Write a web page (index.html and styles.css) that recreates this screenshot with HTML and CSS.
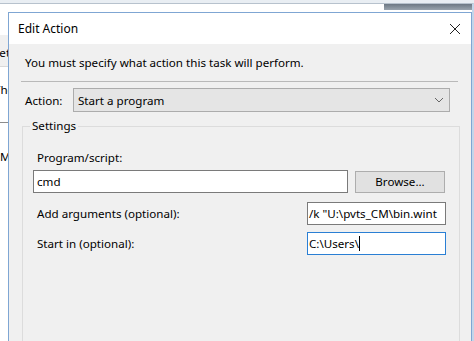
FILE: index.html
```html
<!DOCTYPE html>
<html lang="en">
  <head>
    <meta charset="UTF-8" />
    <title>Edit Action</title>
    <link rel="stylesheet" href="styles.css">
  </head>
  <body>
    <div class="desktop">
      <!-- window behind the dialog -->
      <div class="back-window">
        <div class="back-top">
          <div class="back-top-light"></div>
          <div class="back-top-dark"></div>
        </div>
        <div class="back-side">
          <div class="back-tab"><span>Settings</span></div>
          <p class="back-text"><span class="back-shift">The</span></p>
          <div class="back-line"></div>
          <p class="back-text back-text-low">MW</p>
        </div>
      </div>

      <!-- Edit Action dialog -->
      <div class="dialog">
        <div class="titlebar">
          <span class="title">Edit Action</span>
          <svg class="close" width="12" height="12" viewBox="0 0 12 12">
            <path d="M1 1 L11 11 M11 1 L1 11" stroke="#222" stroke-width="1" fill="none" />
          </svg>
        </div>

        <div class="dialog-body">
          <p class="intro">You must specify what action this task will perform.</p>
          <div class="separator"></div>

          <div class="action-row">
            <span class="action-label">Action:</span>
            <div class="combo">
              <span>Start a program</span>
              <svg width="10" height="6" viewBox="0 0 10 6">
                <path d="M1 1 L5 5 L9 1" stroke="#666" stroke-width="1" fill="none" />
              </svg>
            </div>
          </div>

          <fieldset class="settings">
            <legend>Settings</legend>
            <div class="settings-body">
              <p class="field-label">Program/script:</p>
              <div class="program-row">
                <div class="textbox program-box">cmd</div>
                <div class="button">Browse...</div>
              </div>

              <div class="field-row">
                <span class="field-label">Add arguments (optional):</span>
                <div class="textbox short-box">/k "U:\pvts_CM\bin.wint</div>
              </div>

              <div class="field-row start-row">
                <span class="field-label">Start in (optional):</span>
                <div class="textbox short-box focused">C:\Users\<span class="caret"></span></div>
              </div>
            </div>
          </fieldset>
        </div>
      </div>
    </div>
  </body>
</html>
```

FILE: styles.css
```css
* {
  margin: 0;
  padding: 0;
  box-sizing: border-box;
}

body {
  width: 474px;
  height: 341px;
  overflow: hidden;
  font-family: 'Noto Sans', sans-serif;
  font-size: 11.6px;
  color: #000;
  background: #e9eef3;
}

.desktop {
  position: relative;
  height: 341px;
  overflow: hidden;
}

/* Window behind */
.back-window {
  margin-top: 3px;
  height: 338px;
  background: #fff;
  border-top: 1px solid #b7c2cd;
  border-right: 2px solid #c4d6ea;
}

.back-top {
  display: flex;
  height: 6px;
}

.back-top-light {
  width: 384px;
}

.back-top-dark {
  flex: 1;
  background: linear-gradient(to bottom, #6d7884, #9aa4ae);
}

.back-side {
  width: 9px;
  overflow: hidden;
  padding-top: 25px;
}

.back-tab {
  height: 32px;
  background: #f0f0f0;
  border-bottom: 1px solid #d9d9d9;
  padding-top: 10px;
  white-space: nowrap;
}

.back-tab span {
  margin-left: -7px;
}

.back-text {
  margin-top: 15px;
  line-height: 16px;
  white-space: nowrap;
}

.back-shift {
  margin-left: -6px;
}

.back-line {
  margin-top: 24px;
  border-top: 1px solid #8c8c8c;
}

.back-text-low {
  margin-top: 26px;
}

/* Dialog */
.dialog {
  position: absolute;
  left: 8px;
  top: 12px;
  width: 464px;
  height: 340px;
  border: 1px solid #7fa6d3;
  display: flex;
  flex-direction: column;
}

.titlebar {
  flex: none;
  height: 31px;
  background: #fff;
  display: flex;
  align-items: center;
  justify-content: space-between;
  padding: 0 10px 0 9px;
}

.title {
  font-size: 12px;
}

.dialog-body {
  flex: 1;
  overflow: hidden;
  background: #f0f0f0;
  padding: 11px 13px 0 12px;
}

.intro {
  line-height: 16px;
  padding-left: 4px;
}

.separator {
  margin-top: 10px;
  border-top: 1px solid #b9b9b9;
}

.action-row {
  display: flex;
  align-items: center;
  margin-top: 6px;
  margin-right: 8px;
}

.action-label {
  width: 52px;
  padding-left: 4px;
}

.combo {
  flex: 1;
  height: 24px;
  background: #e5e5e5;
  border: 1px solid #acacac;
  display: flex;
  align-items: center;
  justify-content: space-between;
  padding: 0 5px 0 4px;
}

/* Settings group */
.settings {
  margin: 6px -2px 0 1px;
  border: 1px solid #dcdcdc;
  height: 240px;
}

.settings legend {
  margin-left: 7px;
  padding: 0 2px;
  line-height: 16px;
}

.settings-body {
  padding: 16px 13px 0 10px;
}

.field-label {
  padding-left: 4px;
  line-height: 16px;
}

.program-row {
  display: flex;
  gap: 7px;
  margin-top: 4px;
  align-items: flex-start;
}

.textbox {
  height: 23px;
  background: #fff;
  border: 1px solid #7a7a7a;
  padding: 0 3px;
  line-height: 21px;
  white-space: nowrap;
  overflow: hidden;
}

.program-box {
  width: 315px;
}

.button {
  width: 90px;
  height: 22px;
  margin-top: 1px;
  background: #e1e1e1;
  border: 1px solid #adadad;
  text-align: center;
  line-height: 20px;
}

.field-row {
  display: flex;
  justify-content: space-between;
  align-items: center;
  margin-top: 9px;
}

.start-row {
  margin-top: 7px;
}

.short-box {
  width: 139px;
  padding: 0 1px;
}

.focused {
  border-color: #2a7fd4;
  padding-left: 1px;
}

.caret {
  display: inline-block;
  width: 1px;
  height: 15px;
  background: #000;
  vertical-align: -3px;
}
```
